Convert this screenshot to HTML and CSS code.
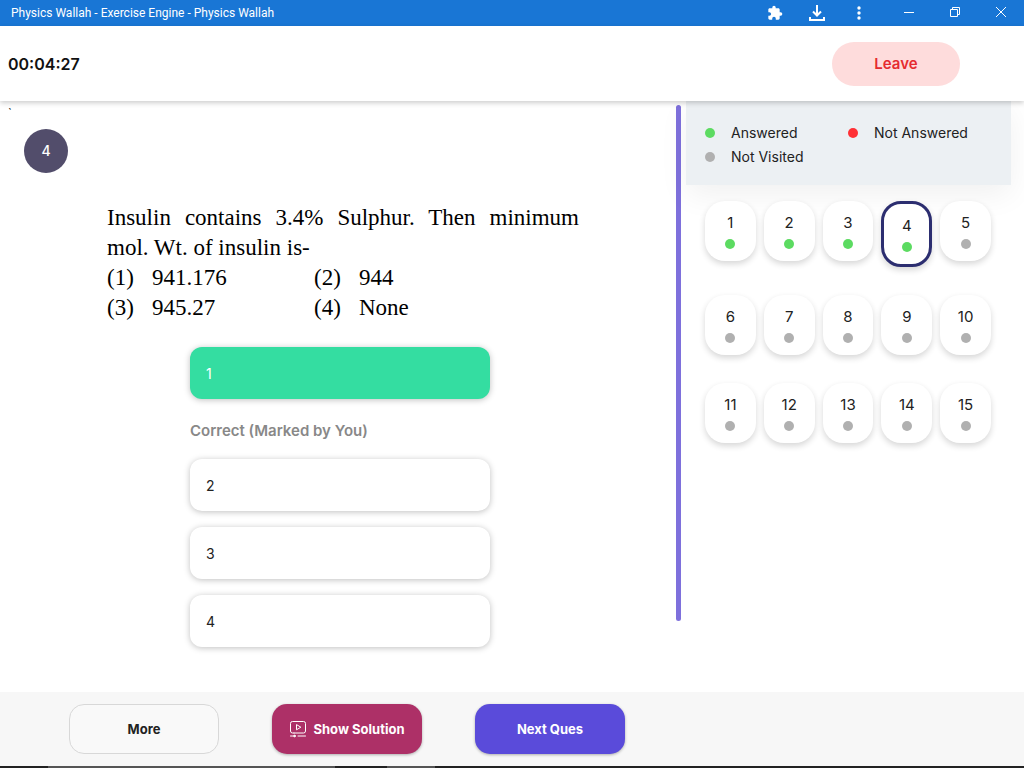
FILE: index.html
```html
<!DOCTYPE html>
<html lang="en">
<head>
    <meta charset="UTF-8">
    <meta name="viewport" content="width=device-width, initial-scale=1.0">
    <title>Physics Wallah - Exercise Engine - Physics Wallah</title>
    <link rel="stylesheet" href="styles.css">
</head>
<body>

    <!-- Window title bar -->
    <div class="titlebar">
        <span class="titlebar-text">Physics Wallah - Exercise Engine - Physics Wallah</span>
        <div class="titlebar-buttons">
            <div class="app-btns">
                <button class="win-btn" aria-label="Extensions">
                    <svg width="16" height="16" viewBox="0 0 24 24"><path fill="#fff" d="M20.500 11H19V7c0-1.100-.9-2-2-2h-4V3.500a2.500 2.500 0 0 0-5 0V5H4c-1.100 0-2 .9-2 2v3.800h1.500a2.700 2.700 0 0 1 0 5.400H2V20c0 1.100.9 2 2 2h3.800v-1.500a2.700 2.700 0 0 1 5.400 0V22H17c1.100 0 2-.9 2-2v-4h1.500a2.500 2.500 0 0 0 0-5z"/></svg>
                </button>
                <button class="win-btn" aria-label="Downloads">
                    <svg width="18" height="18" viewBox="0 0 18 18" fill="none" stroke="#fff" stroke-width="2"><path d="M9 1v10M5 7.500l4 4 4-4M2 13v3h14v-3"/></svg>
                </button>
                <button class="win-btn" aria-label="Menu">
                    <svg width="18" height="18" viewBox="0 0 18 18" fill="#fff"><circle cx="9" cy="4" r="1.700"/><circle cx="9" cy="9" r="1.700"/><circle cx="9" cy="14" r="1.700"/></svg>
                </button>
            </div>
            <button class="win-btn win-ctl" aria-label="Minimize">
                <svg width="12" height="12" viewBox="0 0 12 12" stroke="#fff"><path d="M1 6.500h10"/></svg>
            </button>
            <button class="win-btn win-ctl" aria-label="Restore">
                <svg width="12" height="12" viewBox="0 0 12 12" fill="none" stroke="#fff"><path d="M1.500 3.500h7v7h-7zM3.500 3.500v-2h7v7h-2"/></svg>
            </button>
            <button class="win-btn win-ctl" aria-label="Close">
                <svg width="12" height="12" viewBox="0 0 12 12" stroke="#fff"><path d="M1 1l10 10M11 1L1 11"/></svg>
            </button>
        </div>
    </div>

    <!-- Timer -->
    <header class="header">
        <div class="timer">00:04:27</div>
        <button class="leave-btn">Leave</button>
    </header>

    <main class="main">
        <!-- Question -->
        <section class="question">
            <span class="tick">`</span>
            <div class="question-no">4</div>

            <div class="question-text">
                <p>Insulin contains 3.4% Sulphur. Then minimum mol. Wt. of insulin is-</p>
                <div class="choices">
                    <span>(1)</span><span>941.176</span><span>(2)</span><span>944</span>
                    <span>(3)</span><span>945.27</span><span>(4)</span><span>None</span>
                </div>
            </div>

            <div class="options">
                <button class="option option-correct">1</button>
                <p class="result">Correct (Marked by You)</p>
                <button class="option">2</button>
                <button class="option">3</button>
                <button class="option">4</button>
            </div>
        </section>

        <div class="divider"></div>

        <!-- Question palette -->
        <aside class="palette">
            <div class="legend">
                <div class="legend-item"><i class="dot green"></i>Answered</div>
                <div class="legend-item"><i class="dot red"></i>Not Answered</div>
                <div class="legend-item"><i class="dot"></i>Not Visited</div>
            </div>
            <div class="numbers">
                <button class="number">1<i class="dot green"></i></button>
                <button class="number">2<i class="dot green"></i></button>
                <button class="number">3<i class="dot green"></i></button>
                <button class="number active">4<i class="dot green"></i></button>
                <button class="number">5<i class="dot"></i></button>
                <button class="number">6<i class="dot"></i></button>
                <button class="number">7<i class="dot"></i></button>
                <button class="number">8<i class="dot"></i></button>
                <button class="number">9<i class="dot"></i></button>
                <button class="number">10<i class="dot"></i></button>
                <button class="number">11<i class="dot"></i></button>
                <button class="number">12<i class="dot"></i></button>
                <button class="number">13<i class="dot"></i></button>
                <button class="number">14<i class="dot"></i></button>
                <button class="number">15<i class="dot"></i></button>
            </div>
        </aside>
    </main>

    <!-- Bottom actions -->
    <footer class="footer">
        <button class="btn btn-more">More</button>
        <button class="btn btn-solution">
            <svg width="16" height="18" viewBox="0 0 16 18" fill="none" stroke="#fff" stroke-linecap="round" stroke-linejoin="round"><path d="M4 13H2.500Q.5 13 .5 11V3.500Q.5 1.500 2.500 1.500h11q2 0 2 2V11q0 2-2 2H4"/><path d="M6.500 5v4.800l4-2.400z"/><path d="M.5 16H5M8 16h7.500"/><circle cx="4.500" cy="16" r=".8" fill="#fff"/></svg>
            Show Solution
        </button>
        <button class="btn btn-next">Next Ques</button>
    </footer>
    <div class="taskbar"></div>

</body>
</html>
```
FILE: styles.css
```css
* {
    box-sizing: border-box;
}

body {
    margin: 0;
    min-height: 100vh;
    display: flex;
    flex-direction: column;
    font-family: Inter, "Liberation Sans", sans-serif;
    color: #222;
    background-color: #fff;
}

button {
    font-family: inherit;
    color: inherit;
    border: none;
    padding: 0;
    cursor: pointer;
}

p {
    margin: 0;
}

/* Title bar */
.titlebar {
    height: 26px;
    display: flex;
    align-items: center;
    justify-content: space-between;
    padding-left: 11px;
    background-color: #1976d5;
    color: #fff;
    font-family: Roboto, sans-serif;
    font-size: 12px;
    line-height: 26px;
}

.titlebar-buttons {
    display: flex;
}

.app-btns {
    display: flex;
    padding-right: 6px;
}

.win-btn {
    width: 42px;
    height: 26px;
    display: flex;
    align-items: center;
    justify-content: center;
    background: none;
}

.win-ctl {
    width: 46px;
    padding-bottom: 2px;
}

/* Header */
.header {
    height: 75px;
    display: flex;
    align-items: center;
    justify-content: space-between;
    padding: 0 64px 0 8px;
    background-color: #fff;
    box-shadow: 0 2px 5px rgba(0, 0, 0, 0.2);
    position: relative;
    z-index: 1;
}

.timer {
    font-size: 16px;
    font-weight: 600;
    color: #111;
}

.leave-btn {
    width: 128px;
    height: 44px;
    border-radius: 22px;
    background-color: #fedcdc;
    color: #e52b2f;
    font-size: 15px;
    font-weight: 600;
}

/* Main area */
.main {
    flex: 1;
    display: flex;
}

.question {
    flex: 1;
    padding: 4px 0 45px 4px;
}

.tick {
    display: block;
    height: 24px;
    padding-left: 4px;
    font-size: 12px;
}

.question-no {
    width: 44px;
    height: 44px;
    margin-left: 20px;
    border-radius: 50%;
    background-color: #524d6b;
    color: #fff;
    font-size: 14px;
    font-weight: 500;
    line-height: 44px;
    text-align: center;
}

.question-text {
    margin: 30px 97px 24px 103px;
    font-family: "Liberation Serif", serif;
    font-size: 23px;
    line-height: 30px;
    color: #000;
}

.question-text p {
    text-align: justify;
}

.choices {
    display: grid;
    grid-template-columns: 45px 162px 45px 1fr;
}

.options {
    width: 300px;
    margin: 0 auto;
    display: flex;
    flex-direction: column;
    gap: 16px;
}

.option {
    height: 52px;
    padding: 0 16px;
    border-radius: 12px;
    background-color: #fff;
    box-shadow: 0 1px 6px rgba(0, 0, 0, 0.25);
    font-size: 14px;
    text-align: left;
}

.option-correct {
    background-color: #34dda1;
    color: #fff;
}

.result {
    height: 28px;
    color: #888;
    font-size: 15px;
    font-weight: 600;
    line-height: 32px;
}

.divider {
    width: 5px;
    margin: 4px 5px 71px 0;
    border-radius: 3px;
    background-color: #7e70dc;
}

/* Palette */
.palette {
    width: 325px;
    margin-right: 13px;
}

.legend {
    display: grid;
    grid-template-columns: 143px 1fr;
    padding: 20px 19px 16px;
    background-color: #ecf0f3;
    box-shadow: 0 10px 30px rgba(0, 0, 0, 0.06);
    font-size: 14px;
    line-height: 24px;
}

.legend-item {
    display: flex;
    align-items: center;
    gap: 16px;
}

.dot {
    width: 10px;
    height: 10px;
    border-radius: 50%;
    background-color: #b0b0b0;
}

.green {
    background-color: #5cdb61;
}

.red {
    background-color: #ff3035;
}

.numbers {
    position: relative;
    display: grid;
    grid-template-columns: repeat(5, 1fr);
    align-items: start;
    gap: 28px 8px;
    padding: 16px 20px 16px 19px;
}

.number {
    height: 60px;
    display: flex;
    flex-direction: column;
    align-items: center;
    justify-content: center;
    gap: 6px;
    border-radius: 20px;
    background-color: #fff;
    box-shadow: 0 3px 6px rgba(0, 0, 0, 0.16);
    font-size: 15px;
    line-height: 20px;
}

.number.active {
    height: 66px;
    border: 3px solid #2c2e70;
}

/* Footer */
.footer {
    display: flex;
    gap: 53px;
    padding: 12px 69px;
    background-color: #f7f7f7;
}

.btn {
    width: 150px;
    height: 50px;
    display: flex;
    align-items: center;
    justify-content: center;
    gap: 8px;
    border-radius: 15px;
    font-size: 13px;
    font-weight: 700;
    white-space: nowrap;
}

.btn-more {
    border: 1px solid #d8d8d8;
    background-color: #f9f9f9;
}

.btn-solution {
    background-color: #ad3067;
    color: #fff;
    box-shadow: 0 1px 3px rgba(0, 0, 0, 0.3);
}

.btn-next {
    background-color: #5a4bda;
    color: #fff;
    box-shadow: 0 1px 3px rgba(0, 0, 0, 0.3);
}

/* Strip at the bottom edge of the window */
.taskbar {
    height: 2px;
    background: linear-gradient(90deg, #222 48px, #555 48px, #555 335px, #222 335px, #222 387px, #555 387px, #555 435px, #222 435px);
}
```
